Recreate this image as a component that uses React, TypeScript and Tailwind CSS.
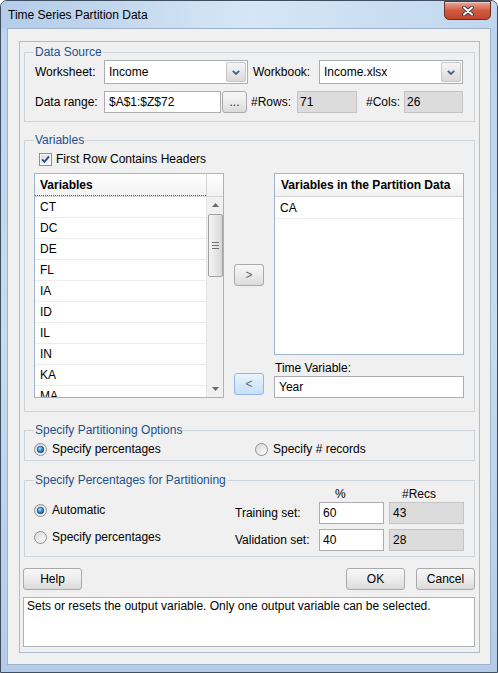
import React from 'react'

function Radio({ checked }: { checked?: boolean }) {
  return (
    <svg width="13" height="13" viewBox="0 0 13 13" className="shrink-0">
      <defs>
        <linearGradient id="radioFill" x1="0" y1="0" x2="1" y2="1">
          <stop offset="0" stopColor="#d6d6d6" />
          <stop offset="1" stopColor="#ffffff" />
        </linearGradient>
        <radialGradient id="radioDot" cx="0.4" cy="0.35" r="0.7">
          <stop offset="0" stopColor="#b4e2f9" />
          <stop offset="0.55" stopColor="#2f8ad0" />
          <stop offset="1" stopColor="#0c3d78" />
        </radialGradient>
      </defs>
      <circle cx="6.5" cy="6.5" r="6" fill="url(#radioFill)" stroke="#8e8f8f" />
      {checked && <circle cx="6.5" cy="6.5" r="3.3" fill="url(#radioDot)" stroke="#1b4b7e" strokeWidth="0.7" />}
    </svg>
  )
}

function Checkbox() {
  return (
    <svg width="13" height="13" viewBox="0 0 13 13" className="shrink-0">
      <defs>
        <linearGradient id="cbFill" x1="0" y1="0" x2="1" y2="1">
          <stop offset="0" stopColor="#dcdcdc" />
          <stop offset="1" stopColor="#fbfbfb" />
        </linearGradient>
      </defs>
      <rect x="0.5" y="0.5" width="12" height="12" fill="#f6f6f6" stroke="#8e8f8f" />
      <rect x="2" y="2" width="9" height="9" fill="url(#cbFill)" />
      <path d="M3 6.3 L5.4 8.9 L10 3.3" stroke="#2c4e8e" strokeWidth="1.9" fill="none" />
    </svg>
  )
}

function Combo({ value, className }: { value: string; className?: string }) {
  return (
    <div className={`h-[24px] flex border border-[#abadb3] bg-white ${className ?? ''}`}>
      <span className="flex-1 pl-[4px] self-center">{value}</span>
      <div className="w-[20px] m-[1px] border border-[#c6c6c6] rounded-[2px] bg-gradient-to-b from-[#f6f6f6] to-[#d9d9d9] flex items-center justify-center">
        <svg width="8" height="5" viewBox="0 0 8 5">
          <path d="M0.8 0.8 L4 4 L7.2 0.8" stroke="#4a5f87" strokeWidth="1.8" fill="none" />
        </svg>
      </div>
    </div>
  )
}

function Field({ value, gray, className }: { value: string; gray?: boolean; className?: string }) {
  return (
    <div
      className={`h-[22px] flex items-center border ${
        gray ? 'bg-[#dcdcdc] border-[#c4c4c4]' : 'bg-white border-[#abadb3]'
      } ${className ?? ''}`}
    >
      {value}
    </div>
  )
}

function Btn({ children, className, blue }: { children: React.ReactNode; className?: string; blue?: boolean }) {
  return (
    <div
      className={`h-[22px] flex items-center justify-center rounded-[3px] border ${
        blue
          ? 'border-[#8fb7e0] bg-gradient-to-b from-[#eaf4fd] to-[#c6dff7]'
          : 'border-[#aaaaaa] bg-gradient-to-b from-[#f7f7f7] via-[#ececec] to-[#dadada]'
      } ${className ?? ''}`}
    >
      {children}
    </div>
  )
}

function Group({ title, className, children }: { title: string; className?: string; children: React.ReactNode }) {
  return (
    <fieldset className={`border border-[#cdd5dc] ml-[1px] ${className ?? ''}`}>
      <legend className="px-[1px] leading-[14px] text-[#21508f]">{title}</legend>
      {children}
    </fieldset>
  )
}

const stateVars = ['CT', 'DC', 'DE', 'FL', 'IA', 'ID', 'IL', 'IN', 'KA', 'MA']

export default function App() {
  return (
    <div className="w-[498px] h-[673px] font-['Liberation_Sans',Arial,sans-serif] text-[12px] leading-[14px] text-black">
      <div className="w-full h-full flex flex-col rounded-t-[7px] border border-[#3e4d60] bg-gradient-to-b from-[#bcd3ed] via-[#c7dbf1] to-[#b4cce8]">
        {/* title bar */}
        <div className="h-[27px] shrink-0 flex items-start rounded-t-[6px] bg-gradient-to-r from-[#b3cce8] via-[#d6e6f6] to-[#c0d6ee]">
          <span className="pl-[7px] pt-[7px]">Time Series Partition Data</span>
          <div className="ml-auto mr-[6px] w-[47px] h-[19px] rounded-b-[5px] border border-[#6e2b20] bg-gradient-to-b from-[#e9a897] via-[#d25a42] to-[#c0452c] shadow-[inset_0_1px_0_rgba(255,255,255,0.45)] flex items-center justify-center">
            <svg width="14" height="10" viewBox="0 0 14 10">
              <path d="M3 1.5 L11 8.5 M11 1.5 L3 8.5" stroke="#3a3a3a" strokeWidth="3.8" strokeLinecap="round" />
              <path d="M3 1.5 L11 8.5 M11 1.5 L3 8.5" stroke="#ffffff" strokeWidth="2" strokeLinecap="round" />
            </svg>
          </div>
        </div>

        {/* client area */}
        <div className="flex-1 mx-[6px] mb-[7px] border border-[#9fb3cb] bg-[#f0f0f0] pt-[12px] pb-[11px] pl-[11px] pr-[10px] flex flex-col">
          <div className="flex-1 border border-[#abbdd2] flex flex-col pl-[3px] pr-[4px] pt-[3px]">
            {/* Data Source */}
            <Group title="Data Source" className="pl-[9px] pr-[11px] pb-[8px]">
              <div className="flex items-center h-[24px] mt-[1px]">
                <span className="w-[70px] pl-[1px]">Worksheet:</span>
                <Combo value="Income" className="w-[144px]" />
                <span className="w-[66px] ml-[5px]">Workbook:</span>
                <Combo value="Income.xlsx" className="flex-1" />
              </div>
              <div className="flex items-center h-[22px] mt-[7px]">
                <span className="w-[70px] pl-[1px]">Data range:</span>
                <Field value="$A$1:$Z$72" className="w-[117px] pl-[4px]" />
                <Btn className="ml-[1px] w-[25px] text-[#333]">...</Btn>
                <span className="ml-[4px] w-[46px]">#Rows:</span>
                <Field value="71" gray className="w-[60px] pl-[2px]" />
                <span className="ml-[9px] w-[38px]">#Cols:</span>
                <Field value="26" gray className="flex-1 pl-[2px]" />
              </div>
            </Group>

            {/* Variables */}
            <Group title="Variables" className="mt-[11px] pl-[9px] pr-[10px] pb-[13px]">
              <div className="flex items-center h-[14px] mt-[5px] pl-[5px]">
                <Checkbox />
                <span className="ml-[4px]">First Row Contains Headers</span>
              </div>
              <div className="flex h-[225px] mt-[7px]">
                {/* left list */}
                <div className="w-[190px] border border-[#9fb4cd] bg-white flex flex-col">
                  <div className="h-[23px] flex bg-gradient-to-b from-white to-[#f1f1f1] border-b border-[#d5d5d5]">
                    <div className="flex-1 flex items-center pl-[5px] font-bold border-b border-dotted border-[#555]">
                      Variables
                    </div>
                    <div className="w-[17px] border-l border-[#d5d5d5]" />
                  </div>
                  <div className="flex-1 flex overflow-hidden">
                    <div className="flex-1 flex flex-col overflow-hidden">
                      {stateVars.map((v) => (
                        <div key={v} className="h-[21px] shrink-0 flex items-center pl-[5px] border-b border-[#ececec]">
                          {v}
                        </div>
                      ))}
                    </div>
                    <div className="w-[17px] border-l border-[#e6e6e6] bg-[#f0f0f0] flex flex-col items-center">
                      <svg width="7" height="4" viewBox="0 0 7 4" className="mt-[6px]">
                        <path d="M0 4 L3.5 0 L7 4 Z" fill="#6a6a6a" />
                      </svg>
                      <div className="mt-[7px] w-[15px] h-[63px] rounded-[2px] border border-[#a2a2a2] bg-gradient-to-r from-[#f4f4f4] via-[#e8e8e8] to-[#d6d6d6] flex flex-col items-center justify-center gap-[2px]">
                        <div className="w-[7px] h-px bg-[#6f6f6f]" />
                        <div className="w-[7px] h-px bg-[#6f6f6f]" />
                        <div className="w-[7px] h-px bg-[#6f6f6f]" />
                      </div>
                      <svg width="7" height="4" viewBox="0 0 7 4" className="mt-auto mb-[6px]">
                        <path d="M0 0 L3.5 4 L7 0 Z" fill="#6a6a6a" />
                      </svg>
                    </div>
                  </div>
                </div>

                {/* move buttons */}
                <div className="w-[30px] mx-[10px] flex flex-col pt-[91px]">
                  <Btn className="text-[#666]">&gt;</Btn>
                  <Btn blue className="mt-[87px] text-[#666]">&lt;</Btn>
                </div>

                {/* right list */}
                <div className="w-[190px] flex flex-col">
                  <div className="h-[182px] border border-[#9fb4cd] bg-white flex flex-col">
                    <div className="h-[23px] flex items-center pl-[6px] font-bold bg-gradient-to-b from-white to-[#f1f1f1] border-b border-[#d5d5d5]">
                      Variables in the Partition Data
                    </div>
                    <div className="h-[22px] flex items-center pl-[5px] border-b border-[#ececec]">CA</div>
                  </div>
                  <span className="mt-[6px] pl-[1px]">Time Variable:</span>
                  <Field value="Year" className="mt-[1px] pl-[4px]" />
                </div>
              </div>
            </Group>

            {/* Partitioning options */}
            <Group title="Specify Partitioning Options" className="mt-[11px] pl-[9px] pr-[10px] pb-[4px]">
              <div className="flex items-center h-[14px] mt-[5px]">
                <div className="w-[221px] flex items-center">
                  <Radio checked />
                  <span className="ml-[5px]">Specify percentages</span>
                </div>
                <Radio />
                <span className="ml-[5px]">Specify # records</span>
              </div>
            </Group>

            {/* Percentages */}
            <Group title="Specify Percentages for Partitioning" className="mt-[12px] pl-[9px] pr-[10px] pb-[5px]">
              <div className="flex">
                <div className="w-[201px] flex flex-col">
                  <div className="flex items-center h-[14px] mt-[16px]">
                    <Radio checked />
                    <span className="ml-[5px]">Automatic</span>
                  </div>
                  <div className="flex items-center h-[14px] mt-[13px]">
                    <Radio />
                    <span className="ml-[5px]">Specify percentages</span>
                  </div>
                </div>
                <div className="flex-1 flex flex-col">
                  <div className="flex h-[15px]">
                    <span className="w-[84px]" />
                    <span className="w-[65px] pl-[16px]">%</span>
                    <span className="ml-[5px] pl-[13px]">#Recs</span>
                  </div>
                  <div className="flex items-center">
                    <span className="w-[84px]">Training set:</span>
                    <Field value="60" className="w-[65px] pl-[3px]" />
                    <Field value="43" gray className="ml-[5px] w-[75px] pl-[3px]" />
                  </div>
                  <div className="flex items-center mt-[5px]">
                    <span className="w-[84px]">Validation set:</span>
                    <Field value="40" className="w-[65px] pl-[3px]" />
                    <Field value="28" gray className="ml-[5px] w-[75px] pl-[3px]" />
                  </div>
                </div>
              </div>
            </Group>

            {/* buttons */}
            <div className="flex mt-[11px]">
              <Btn className="w-[59px]">Help</Btn>
              <Btn className="w-[59px] ml-auto">OK</Btn>
              <Btn className="w-[59px] ml-[11px]">Cancel</Btn>
            </div>

            {/* description */}
            <div className="mt-[7px] h-[50px] border border-[#adb2b8] bg-white pl-[3px] pt-[1px]">
              Sets or resets the output variable. Only one output variable can be selected.
            </div>
          </div>
        </div>
      </div>
    </div>
  )
}
